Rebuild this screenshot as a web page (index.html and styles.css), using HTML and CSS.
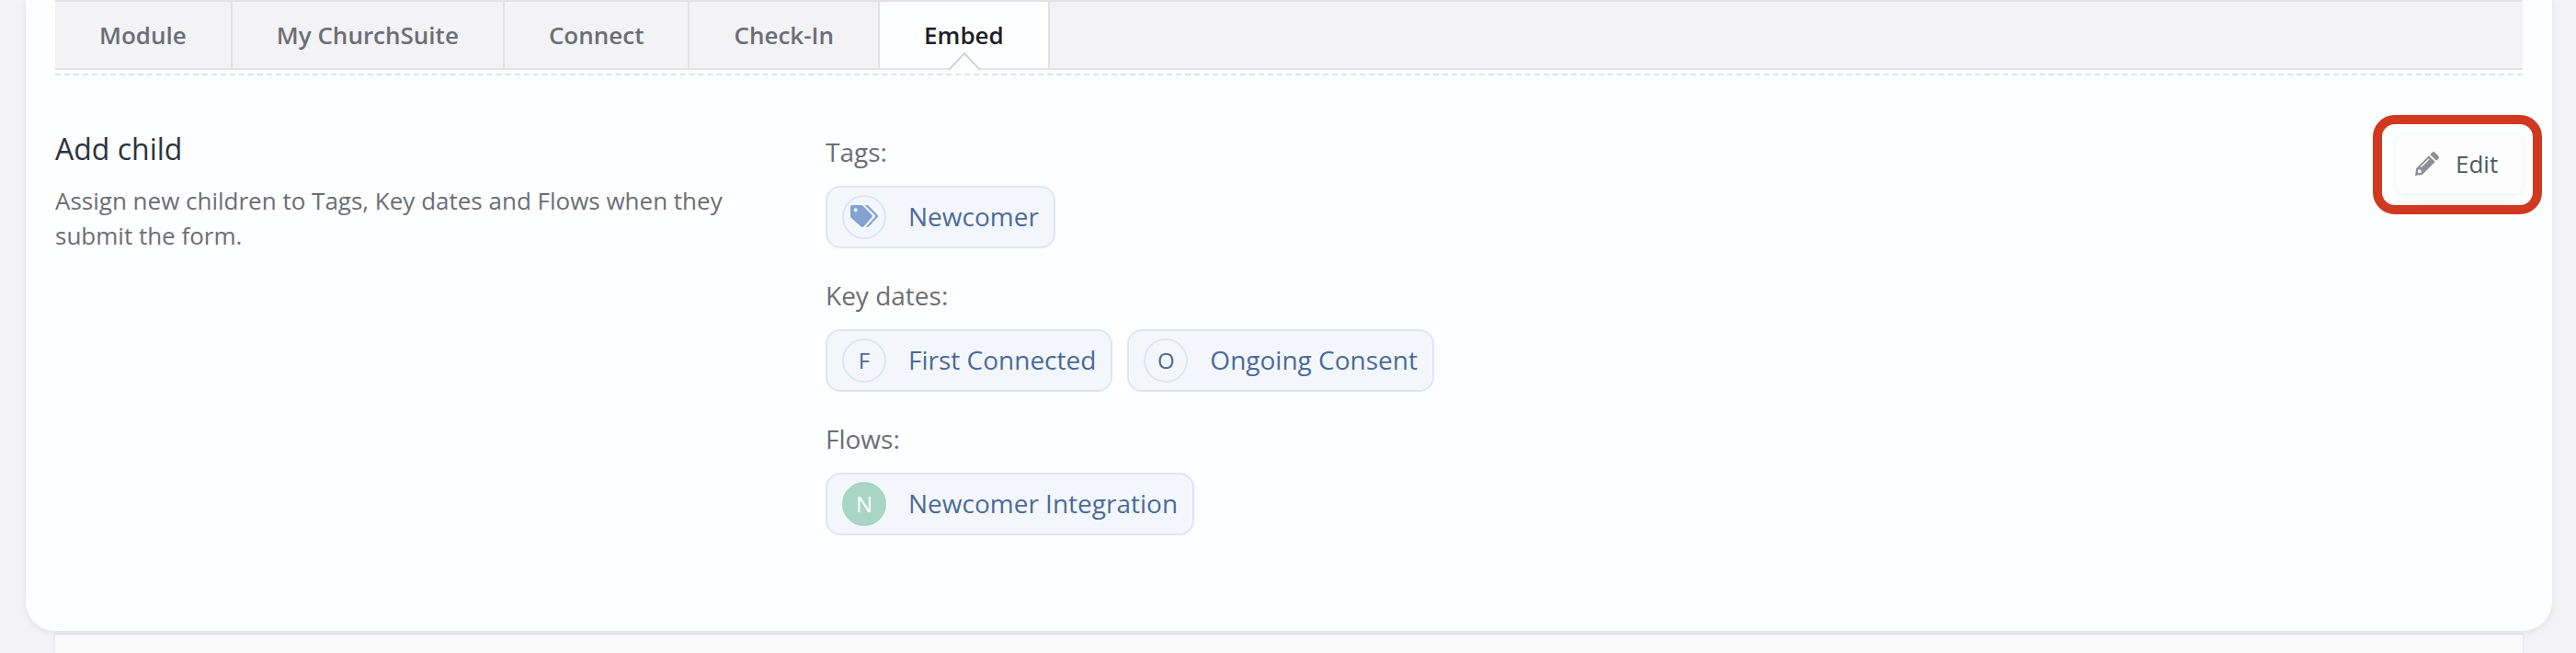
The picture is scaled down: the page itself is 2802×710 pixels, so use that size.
FILE: index.html
```html
<!DOCTYPE html>
<html lang="en">
<head>
<meta charset="utf-8">
<title>Embed settings</title>
<link rel="stylesheet" href="styles.css">
</head>
<body>
<main class="panel">
  <nav class="tabs">
    <a class="tab">Module</a>
    <a class="tab">My ChurchSuite</a>
    <a class="tab">Connect</a>
    <a class="tab">Check-In</a>
    <a class="tab tab-active">Embed
      <svg class="caret" width="36" height="19" viewBox="0 0 36 19"><path class="caret-fill" d="M1.5 19 L18 1 L34.5 19Z"/><path class="caret-line" d="M1.5 18.5 L18 1 L34.5 18.5"/></svg>
    </a>
  </nav>
  <section class="section">
    <div class="intro">
      <h2 class="title">Add child</h2>
      <p class="description">Assign new children to Tags, Key dates and Flows when they submit the form.</p>
    </div>
    <div class="groups">
      <div class="group">
        <div class="label">Tags:</div>
        <div class="chips">
          <a class="chip"><span class="avatar"><svg class="tags" width="30" height="24" viewBox="0 0 30 24"><path class="tag-icon" fill-rule="evenodd" d="M2 0H11.5C12.4 0 13.2.4 13.8 1L23.2 10.4Q24.6 12 23.2 13.6L14.8 23Q13 24.8 11.2 23L1 14Q0 13 0 12V2Q0 0 2 0ZM5.7 3.2A2 2 0 1 0 5.7 7.2A2 2 0 1 0 5.7 3.2Z"/><path class="tag-icon" d="M15.5 0H18.2Q19 0 19.7.7L29.3 10.5Q30.8 12 29.3 13.6L20 23.3Q19.3 24 18.2 24H16.8L26.5 13.3Q27.7 12 26.5 10.8Z"/></svg></span><span class="chip-text">Newcomer</span></a>
        </div>
      </div>
      <div class="group">
        <div class="label">Key dates:</div>
        <div class="chips">
          <a class="chip"><span class="avatar">F</span><span class="chip-text">First Connected</span></a>
          <a class="chip"><span class="avatar">O</span><span class="chip-text">Ongoing Consent</span></a>
        </div>
      </div>
      <div class="group">
        <div class="label">Flows:</div>
        <div class="chips">
          <a class="chip"><span class="avatar avatar-green">N</span><span class="chip-text">Newcomer Integration</span></a>
        </div>
      </div>
    </div>
    <div class="actions">
      <button class="edit"><svg width="26" height="26" viewBox="0 0 26 26"><path class="pencil" fill-rule="evenodd" d="M15 4.2L21.8 11L8 24.8L0 26L1.2 18ZM3.5 19.3L2.8 22L4.1 23.3L6.8 22.6L6.6 19.8ZM14.5 7.4L5.8 16.1L6.8 17.1L15.5 8.4Z"/><path class="pencil" d="M16.3 2.9L18.5.7Q20 -.6 21.6.7L25.3 4.4Q26.6 6 25.3 7.5L23.1 9.7Z"/></svg><span>Edit</span></button>
      <span class="highlight"></span>
    </div>
  </section>
</main>
<div class="next-card"></div>
</body>
</html>
```
FILE: styles.css
```css
* { box-sizing: border-box; }
body {
  margin: 0;
  height: 710px;
  overflow: hidden;
  background: #f3f3f5;
  color: #6c6e75;
  font-family: "Open Sans", "Noto Sans", sans-serif;
  font-size: 28px;
}
.panel {
  position: relative;
  height: 686px;
  margin: 0 26px 0 28px;
  padding: 0 32px;
  background: #fdfefe;
  border-radius: 0 0 32px 32px;
  box-shadow: 0 2px 4px #e4e2ea, 0 2px 12px rgba(60, 60, 80, .04);
}
.tabs {
  display: flex;
  height: 76px;
  background: #f3f3f5;
  border-top: 2px solid #e3e1e6;
  border-bottom: 2px solid #e3e1e6;
}
.tab {
  padding: 0 48px;
  border-right: 2px solid #e3e1e6;
  color: #6c6e75;
  font-size: 26px;
  font-weight: 600;
  line-height: 72px;
}
.tab-active {
  position: relative;
  background: #fdfefe;
  color: #1c2025;
}
.caret {
  position: absolute;
  left: 50%;
  bottom: -2px;
  margin-left: -17px;
}
.caret-fill { fill: #fdfefe; }
.caret-line { fill: none; stroke: #c9c9cd; stroke-width: 1.6; }
.section {
  display: grid;
  grid-template-columns: 838px 1fr auto;
  margin-top: 4px;
  border-top: 2px dashed #e3e1e6;
}
.intro { padding-top: 56px; }
.title {
  margin: 0;
  color: #2b343b;
  font-size: 32px;
  font-weight: 400;
  line-height: 48px;
}
.description {
  width: 740px;
  margin: 13px 0 0;
  font-size: 26px;
  line-height: 38px;
}
.groups {
  display: flex;
  flex-direction: column;
  gap: 48px;
  padding-top: 63px;
}
.group { height: 108px; }
.label { line-height: 40px; }
.chips {
  display: flex;
  gap: 16px;
  height: 68px;
  margin-top: 17px;
}
.chip {
  display: flex;
  align-items: center;
  gap: 24px;
  padding: 0 16px;
  background: #f3f7fc;
  border: 2px solid #dce5f4;
  border-radius: 16px;
  color: #4c6b99;
  white-space: nowrap;
}
.chip-text { padding-bottom: 2px; }
.avatar {
  display: flex;
  align-items: center;
  justify-content: center;
  width: 48px;
  height: 48px;
  padding-bottom: 2px;
  border: 2px solid #dce5f4;
  border-radius: 50%;
  font-size: 24px;
}
.avatar-green { background: #a8d5c5; border-color: #a8d5c5; color: #fff; }
.tag-icon { fill: #83a2d1; }
.actions {
  position: relative;
  align-self: start;
  margin-top: 64px;
}
.edit {
  display: flex;
  align-items: center;
  gap: 18px;
  width: 138px;
  height: 64px;
  padding: 0 0 0 21px;
  background: #fdfdfe;
  border: 0;
  border-radius: 8px;
  box-shadow: 0 2px 6px rgba(60, 60, 80, .06);
  color: #515a62;
  font: 400 26px "Open Sans", "Noto Sans", sans-serif;
}
.pencil { fill: #8e8f96; }
.highlight {
  position: absolute;
  left: -25px;
  top: -21px;
  width: 184px;
  height: 108px;
  border: 10px solid #d13820;
  border-radius: 24px;
}
.next-card {
  height: 22px;
  margin: 2px 56px 0 58px;
  background: #fafafb;
  border: 2px solid #ebe9f0;
  border-top-color: #e5e3ec;
  border-bottom: 0;
}
```
